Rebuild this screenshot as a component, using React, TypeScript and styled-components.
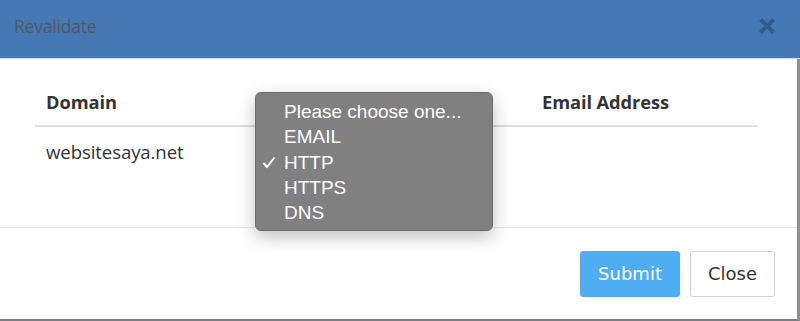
import React from "react";
import styled, { createGlobalStyle } from "styled-components";

const GlobalStyle = createGlobalStyle`
  html, body {
    margin: 0;
    padding: 0;
    background: #ffffff;
  }
  body {
    font-family: "Open Sans", "DejaVu Sans", sans-serif;
  }
`;

const Modal = styled.div`
  position: relative;
  width: 800px;
  height: 321px;
  box-sizing: border-box;
  display: flex;
  flex-direction: column;
  overflow: hidden;
`;

const Header = styled.div`
  height: 59px;
  box-sizing: border-box;
  background: #4679b3;
  border-bottom: 1px solid #c9dcef;
  display: flex;
  align-items: center;
  justify-content: space-between;
  padding: 0 24px 6px 14px;
`;

const Title = styled.div`
  color: #4f5966;
  font-size: 17.5px;
  letter-spacing: -0.2px;
`;

const CloseIcon = () => (
  <svg width="18" height="18" viewBox="0 0 18 18">
    <path
      d="M2.5 2.5 L15.5 15.5 M15.5 2.5 L2.5 15.5"
      stroke="#2f5c8c"
      strokeWidth="4"
      strokeLinecap="butt"
    />
  </svg>
);

const Frame = styled.div`
  flex: 1;
  display: flex;
  flex-direction: column;
  border-right: 3px solid #8e9092;
  border-bottom: 2px solid #7c8082;
`;

const Body = styled.div`
  padding: 18px 39px 0 35px;
  height: 169px;
  box-sizing: border-box;
  border-bottom: 1px solid #e8e8e8;
`;

const Table = styled.div`
  display: grid;
  grid-template-columns: 220px 276px 1fr;
`;

const Cell = styled.div<{ head?: boolean }>`
  padding: 0 11px;
  height: ${(p) => (p.head ? "48px" : "48px")};
  display: flex;
  align-items: center;
  font-size: ${(p) => (p.head ? "18.3px" : "18.6px")};
  color: #333;
  font-weight: ${(p) => (p.head ? 700 : 400)};
  border-bottom: ${(p) => (p.head ? "2px solid #dddddd" : "none")};
  letter-spacing: -0.1px;
`;

const Footer = styled.div`
  flex: 1;
  display: flex;
  justify-content: flex-end;
  align-items: center;
  gap: 10px;
  padding: 0 22px 0 0;
`;

const Button = styled.button<{ primary?: boolean }>`
  height: 46px;
  box-sizing: border-box;
  padding: 0 17px;
  border-radius: 3px;
  font-family: "DejaVu Sans", sans-serif;
  font-size: 18px;
  border: 1px solid ${(p) => (p.primary ? "#4fadf1" : "#cfcfcf")};
  background: ${(p) => (p.primary ? "#4fadf1" : "#ffffff")};
  color: ${(p) => (p.primary ? "#ffffff" : "#333333")};
`;

const Dropdown = styled.div`
  position: absolute;
  left: 255px;
  top: 92px;
  width: 238px;
  height: 139px;
  box-sizing: border-box;
  background: #808080;
  border: 1px solid #6c6c6c;
  border-radius: 6px;
  box-shadow: 0 6px 18px rgba(0, 0, 0, 0.25);
  padding: 6px 0 0 0;
  font-family: "Liberation Sans", Arial, sans-serif;
`;

const Option = styled.div`
  position: relative;
  height: 25.3px;
  line-height: 25px;
  padding-left: 28px;
  color: #ffffff;
  font-size: 19px;
  white-space: nowrap;
`;

const Check = styled.svg`
  position: absolute;
  left: 6px;
  top: 6px;
`;

const CheckMark = () => (
  <Check width="14" height="13" viewBox="0 0 14 13">
    <path
      d="M1.5 7 L5 11 L12.5 1.5"
      fill="none"
      stroke="#ffffff"
      strokeWidth="2"
    />
  </Check>
);

const options = ["Please choose one...", "EMAIL", "HTTP", "HTTPS", "DNS"];

export default function App() {
  return (
    <>
      <GlobalStyle />
      <Modal>
        <Header>
          <Title>Revalidate</Title>
          <CloseIcon />
        </Header>
        <Frame>
          <Body>
            <Table>
              <Cell head>Domain</Cell>
              <Cell head />
              <Cell head>Email Address</Cell>
              <Cell>websitesaya.net</Cell>
              <Cell />
              <Cell />
            </Table>
          </Body>
          <Footer>
            <Button primary>Submit</Button>
            <Button>Close</Button>
          </Footer>
        </Frame>
        <Dropdown>
          {options.map((o) => (
            <Option key={o}>
              {o === "HTTP" && <CheckMark />}
              {o}
            </Option>
          ))}
        </Dropdown>
      </Modal>
    </>
  );
}
